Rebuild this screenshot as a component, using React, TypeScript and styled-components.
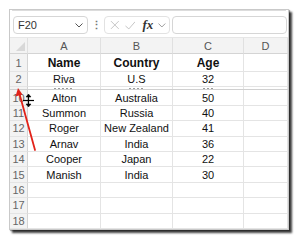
import styled, { createGlobalStyle } from 'styled-components';

const GlobalStyle = createGlobalStyle`
  html, body {
    margin: 0;
    padding: 0;
    background: #ffffff;
  }
  body {
    font-family: "Liberation Sans", Arial, sans-serif;
  }
`;

// column widths of the sheet: row header, A, B, C, D
const COLS = '18px 73px 72px 71px 1fr';

const Page = styled.div`
  width: 300px;
  height: 240px;
  padding: 9px 0 0 9px;
  box-sizing: border-box;
`;

const Window = styled.div`
  position: relative;
  width: 280px;
  height: 221px;
  box-sizing: border-box;
  border: 1px solid #c9c9c9;
  background: #fff;
  box-shadow: 3px 3px 2px rgba(0, 0, 0, 0.75), 1px 1px 1px rgba(0, 0, 0, 0.3);
  overflow: hidden;
  display: flex;
  flex-direction: column;
`;

const TopStrip = styled.div`
  height: 3px;
  margin: 0 2px;
  border: 1px solid #dcdcdc;
  border-top: none;
  border-radius: 0 0 4px 4px;
`;

const FormulaBar = styled.div`
  display: flex;
  align-items: center;
  height: 18px;
  padding: 5px 1px 3px 3px;
`;

const NameBox = styled.div`
  display: flex;
  align-items: center;
  justify-content: space-between;
  width: 75px;
  height: 18px;
  box-sizing: border-box;
  padding: 0 4px;
  border: 1px solid #d6d6d6;
  border-radius: 4px;
  font-size: 11px;
  color: #333;
`;

const Dots = styled.div`
  width: 16px;
  text-align: center;
  color: #777;
  font-size: 11px;
  font-weight: bold;
  line-height: 11px;
`;

const FxBox = styled.div`
  display: flex;
  align-items: center;
  gap: 5px;
  width: 66px;
  height: 18px;
  box-sizing: border-box;
  padding: 0 3px 0 5px;
  border: 1px solid #e2e2e2;
  border-radius: 4px;
`;

const Fx = styled.span`
  font-family: "Liberation Serif", serif;
  font-style: italic;
  font-weight: bold;
  font-size: 13px;
  color: #333;
  margin-left: 2px;
`;

const FormulaInput = styled.div`
  flex: 1;
  height: 18px;
  margin-left: 2px;
  box-sizing: border-box;
  border: 1px solid #d6d6d6;
  border-radius: 4px;
`;

const Sheet = styled.div`
  flex: 1;
  border-top: 1px solid #e6e6e6;
`;

const Row = styled.div<{ $h: number }>`
  display: grid;
  grid-template-columns: ${COLS};
  height: ${p => p.$h}px;
`;

const HeadCell = styled.div`
  display: flex;
  align-items: center;
  justify-content: center;
  background: #f3f3f3;
  border-right: 1px solid #e0e0e0;
  border-bottom: 1px solid #d4d4d4;
  font-size: 11px;
  color: #555;
`;

const Corner = styled(HeadCell)`
  position: relative;
  &::after {
    content: '';
    position: absolute;
    right: 2px;
    bottom: 2px;
    border-left: 9px solid transparent;
    border-bottom: 9px solid #d8d8d8;
  }
`;

const RowNum = styled.div`
  display: flex;
  align-items: center;
  justify-content: center;
  background: #f3f3f3;
  border-right: 1px solid #d4d4d4;
  border-bottom: 1px solid #e4e4e4;
  font-size: 11px;
  color: #666;
`;

const Cell = styled.div<{ $bold?: boolean }>`
  display: flex;
  align-items: center;
  justify-content: center;
  overflow: hidden;
  white-space: nowrap;
  border-right: 1px solid #e4e4e4;
  border-bottom: 1px solid #e4e4e4;
  font-size: ${p => (p.$bold ? 12 : 11)}px;
  font-weight: ${p => (p.$bold ? 'bold' : 'normal')};
  color: #111;
`;

// the frozen split: only the tops of the hidden row's letters peek through
const Split = styled.div`
  display: grid;
  grid-template-columns: ${COLS};
  height: 2px;
  border-bottom: 1px solid #d0d0d0;
`;

const Peek = styled.div`
  display: flex;
  justify-content: center;
  align-items: flex-start;
  border-right: 1px solid #e4e4e4;
`;

const PeekMarks = styled.div<{ $w: number }>`
  width: ${p => p.$w}px;
  height: 1px;
  margin-top: 1px;
  background: repeating-linear-gradient(90deg, #9a9a9a 0 2px, transparent 2px 4px);
`;

const PeekHead = styled.div`
  background: #f3f3f3;
  border-right: 1px solid #d4d4d4;
`;

const Overlay = styled.svg`
  position: absolute;
  left: 0;
  top: 0;
  pointer-events: none;
`;

const people: [string, string, string, string][] = [
  ['10', 'Alton', 'Australia', '50'],
  ['11', 'Summon', 'Russia', '40'],
  ['12', 'Roger', 'New Zealand', '41'],
  ['13', 'Arnav', 'India', '36'],
  ['14', 'Cooper', 'Japan', '22'],
  ['15', 'Manish', 'India', '30'],
  ['16', '', '', ''],
  ['17', '', '', ''],
  ['18', '', '', ''],
];

function Chevron({ color = '#555' }: { color?: string }) {
  return (
    <svg width="8" height="5" viewBox="0 0 8 5">
      <path d="M0.5 0.5 L4 4 L7.5 0.5" fill="none" stroke={color} strokeWidth="1" />
    </svg>
  );
}

export default function App() {
  return (
    <Page>
      <GlobalStyle />
      <Window>
        <TopStrip />
        <FormulaBar>
          <NameBox>
            <span>F20</span>
            <Chevron />
          </NameBox>
          <Dots>⋮</Dots>
          <FxBox>
            <svg width="10" height="10" viewBox="0 0 10 10">
              <path d="M1 1 L9 9 M9 1 L1 9" stroke="#c4c4c4" strokeWidth="1" />
            </svg>
            <svg width="11" height="9" viewBox="0 0 11 9">
              <path d="M0.5 5 L4 8 L10.5 0.5" fill="none" stroke="#c4c4c4" strokeWidth="1" />
            </svg>
            <Fx>fx</Fx>
            <Chevron color="#999" />
          </FxBox>
          <FormulaInput />
        </FormulaBar>
        <Sheet>
          <Row $h={16}>
            <Corner />
            <HeadCell>A</HeadCell>
            <HeadCell>B</HeadCell>
            <HeadCell>C</HeadCell>
            <HeadCell>D</HeadCell>
          </Row>
          <Row $h={18}>
            <RowNum>1</RowNum>
            <Cell $bold>Name</Cell>
            <Cell $bold>Country</Cell>
            <Cell $bold>Age</Cell>
            <Cell />
          </Row>
          <Row $h={15}>
            <RowNum>2</RowNum>
            <Cell>Riva</Cell>
            <Cell>U.S</Cell>
            <Cell>32</Cell>
            <Cell />
          </Row>
          <Split>
            <PeekHead />
            <Peek><PeekMarks $w={20} /></Peek>
            <Peek><PeekMarks $w={16} /></Peek>
            <Peek><PeekMarks $w={10} /></Peek>
            <Peek />
          </Split>
          {people.map(([n, name, country, age]) => (
            <Row $h={15.4} key={n}>
              <RowNum>{n}</RowNum>
              <Cell>{name}</Cell>
              <Cell>{country}</Cell>
              <Cell>{age}</Cell>
              <Cell />
            </Row>
          ))}
        </Sheet>
        <Overlay width="280" height="221" viewBox="0 0 280 221">
          {/* row resize cursor */}
          <g stroke="#000" strokeWidth="1.2" fill="#000">
            <path d="M13 90.5 L24 90.5" />
            <path d="M18.5 85 L18.5 96" />
            <path d="M16 87 L18.5 84 L21 87 Z" strokeWidth="0.5" />
            <path d="M16 94 L18.5 97 L21 94 Z" strokeWidth="0.5" />
          </g>
          {/* red annotation arrow */}
          <path d="M25 140 L9.5 84" stroke="#e2231a" strokeWidth="1.8" strokeLinecap="round" />
          <path d="M8 78 L5.5 86.5 L12.5 84.5 Z" fill="#e2231a" />
        </Overlay>
      </Window>
    </Page>
  );
}
